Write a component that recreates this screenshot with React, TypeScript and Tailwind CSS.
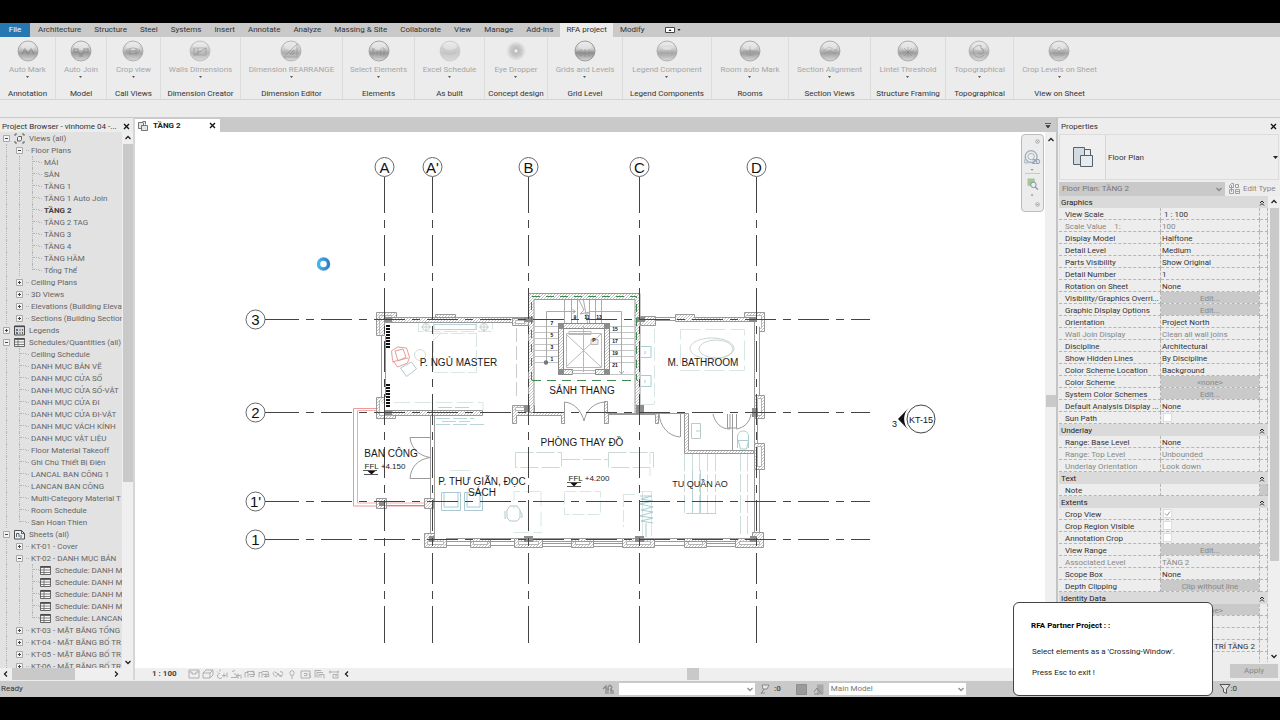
import React from "react";

type Group = { label: string; title: string; width: string; tone: string; glyph: React.ReactNode };

const menuTabs = [
  "Architecture", "Structure", "Steel", "Systems", "Insert", "Annotate", "Analyze", "Massing & Site",
  "Collaborate", "View", "Manage", "Add-Ins", "RFA project", "Modify",
];

const groups: Group[] = [
  { label: "Auto Mark", title: "Annotation", width: "w-14", tone: "#9c9c9c", glyph: <path d="M5 14l3-5 3 5 3-5 3 5M7 9l2 4m5-4l-2 4" strokeWidth="1.600" /> },
  { label: "Auto Join", title: "Model", width: "w-[51px]", tone: "#9a9a9a", glyph: <path d="M4 9h4v3H4zM14 9h4v3h-4zM8 12l3 3 3-3M9 16h4" strokeWidth="1.600" /> },
  { label: "Crop view", title: "Call Views", width: "w-[54px]", tone: "#a4a4a4", glyph: <path d="M4 11c4-4 10-4 14 0-4 4-10 4-14 0zM8 8v7m6-7v7M6 11h10" /> },
  { label: "Walls Dimensions", title: "Dimension Creator", width: "w-20", tone: "#b8b8b8", glyph: <path d="M5 8h12v7H5zM5 15l12-7M9 8v7" /> },
  { label: "Dimension REARRANGE", title: "Dimension Editor", width: "w-[102px]", tone: "#acacac", glyph: <path d="M4 17L17 4v13zM10 14h4v-4z" /> },
  { label: "Select Elements", title: "Elements", width: "w-[72px]", tone: "#969696", glyph: <path d="M5 15V9m4 6v-4m4 5c-2-6 0-9 3-8v9M4 9h3" /> },
  { label: "Excel Schedule", title: "As built", width: "w-[70px]", tone: "#c9c9c9", glyph: <path d="M5 12c4 3 8 3 12 0" opacity=".3" /> },
  { label: "Eye Dropper", title: "Concept design", width: "w-[63px]", tone: "flower", glyph: null },
  { label: "Grids and Levels", title: "Grid Level", width: "w-[75px]", tone: "#8c8c8c", glyph: <path d="M5 12h2m4-3v2m4 1h2M6 16l2-1m3-1v3m3-2l2 1M7 9l1 1m7-1l-1 1M10 13h2" /> },
  { label: "Legend Component", title: "Legend Components", width: "w-[89px]", tone: "#a6a6a6", glyph: <path d="M6 6h10v10H6z" opacity=".25" /> },
  { label: "Room auto Mark", title: "Rooms", width: "w-[77px]", tone: "#9b9b9b", glyph: <path d="M4 11h14M11 6v10M7 13l4-4 4 4M7 15h8" opacity=".6" /> },
  { label: "Section Alignment", title: "Section Views", width: "w-[82px]", tone: "#a0a0a0", glyph: <path d="M4 10h3m2 0h4m2 0h3M5 14c3-3 9-3 12 0M7 9l3-2 4 2" opacity=".7" /> },
  { label: "Lintel Threshold", title: "Structure Framing", width: "w-[75px]", tone: "#9e9e9e", glyph: <path d="M5 12h12M11 7v10M7 8l8 8M15 8l-8 8" /> },
  { label: "Topographical", title: "Topographical", width: "w-[68px]", tone: "#acacac", glyph: <path d="M14 6a6 6 0 1 0 2 9M13 8a3 3 0 1 1-3 4M12 6l3 5" /> },
  { label: "Crop Levels on Sheet", title: "View on Sheet", width: "w-[91px]", tone: "#a2a2a2", glyph: <path d="M4 9l3 2 4-4 4 4 3-2M5 13h12M6 15h10M9 10l2 2 2-2" opacity=".7" /> },
];

function Ball({ tone, glyph, id }: { tone: string; glyph: React.ReactNode; id: string }) {
  if (tone === "flower")
    return (
      <svg className="size-[22px]" viewBox="0 0 22 22" aria-hidden="true">
        <defs>
          <radialGradient id={id}>
            <stop offset="0" stopColor="#ababab" />
            <stop offset=".6" stopColor="#cecece" />
            <stop offset="1" stopColor="#ececec" />
          </radialGradient>
        </defs>
        <circle cx="11" cy="11" r="10" fill={`url(#${id})`} />
        <path d="M11 11L8 5M11 11l3-6M11 11l6-2M11 11l6 4M11 11l1 6M11 11l-4 5M11 11l-6 1M11 11L6 7" stroke="#c4c4c4" strokeWidth="1" />
        <circle cx="11" cy="11" r="1.4" fill="#f4f4f4" />
      </svg>
    );
  return (
    <svg className="size-[22px]" viewBox="0 0 22 22" aria-hidden="true">
      <defs>
        <linearGradient id={id} x1="0" y1="0" x2="0" y2="1">
          <stop offset="0" stopColor="#e3e3e3" />
          <stop offset=".4" stopColor="#cdcdcd" />
          <stop offset=".6" stopColor={tone} />
          <stop offset="1" stopColor="#d9d9d9" />
        </linearGradient>
      </defs>
      <circle cx="11" cy="11" r="10" fill={`url(#${id})`} stroke={tone} strokeWidth=".8" />
      <ellipse cx="11" cy="6" rx="7" ry="4" fill="#fff" opacity=".35" />
      <g fill="none" stroke="#858585" strokeWidth=".9" opacity=".55">{glyph}</g>
    </svg>
  );
}

type Row = { t: string; lv: 0 | 1 | 2; box?: "+" | "-"; icon?: string; bold?: boolean; last?: boolean };

const rows: Row[] = [
  { t: "Views (all)", lv: 0, box: "-", icon: "views" },
  { t: "Floor Plans", lv: 1, box: "-" },
  { t: "MÁI", lv: 2 },
  { t: "SÂN", lv: 2 },
  { t: "TẦNG 1", lv: 2 },
  { t: "TẦNG 1 Auto Join", lv: 2 },
  { t: "TẦNG 2", lv: 2, bold: true },
  { t: "TẦNG 2 TAG", lv: 2 },
  { t: "TẦNG 3", lv: 2 },
  { t: "TẦNG 4", lv: 2 },
  { t: "TẦNG HẦM", lv: 2 },
  { t: "Tổng Thể", lv: 2, last: true },
  { t: "Ceiling Plans", lv: 1, box: "+" },
  { t: "3D Views", lv: 1, box: "+" },
  { t: "Elevations (Building Eleva", lv: 1, box: "+" },
  { t: "Sections (Building Section", lv: 1, box: "+", last: true },
  { t: "Legends", lv: 0, box: "+", icon: "legend" },
  { t: "Schedules/Quantities (all)", lv: 0, box: "-", icon: "table" },
  { t: "Ceiling Schedule", lv: 1 },
  { t: "DANH MỤC BẢN VẼ", lv: 1 },
  { t: "DANH MỤC CỬA SỔ", lv: 1 },
  { t: "DANH MỤC CỬA SỔ-VẬT", lv: 1 },
  { t: "DANH MỤC CỬA ĐI", lv: 1 },
  { t: "DANH MỤC CỬA ĐI-VẬT", lv: 1 },
  { t: "DANH MỤC VÁCH KÍNH", lv: 1 },
  { t: "DANH MỤC VẬT LIỆU", lv: 1 },
  { t: "Floor Material Takeoff", lv: 1 },
  { t: "Ghi Chú Thiết Bị Điện", lv: 1 },
  { t: "LANCAL BAN CÔNG 1", lv: 1 },
  { t: "LANCAN BAN CÔNG", lv: 1 },
  { t: "Multi-Category Material T", lv: 1 },
  { t: "Room Schedule", lv: 1 },
  { t: "San Hoan Thien", lv: 1, last: true },
  { t: "Sheets (all)", lv: 0, box: "-", icon: "sheet" },
  { t: "KT-01 - Cover", lv: 1, box: "+" },
  { t: "KT-02 - DANH MỤC BẢN", lv: 1, box: "-" },
  { t: "Schedule: DANH M", lv: 2, icon: "table" },
  { t: "Schedule: DANH M", lv: 2, icon: "table" },
  { t: "Schedule: DANH M", lv: 2, icon: "table" },
  { t: "Schedule: DANH M", lv: 2, icon: "table" },
  { t: "Schedule: LANCAN", lv: 2, icon: "table", last: true },
  { t: "KT-03 - MẶT BẰNG TỔNG", lv: 1, box: "+" },
  { t: "KT-04 - MẶT BẰNG BỐ TR", lv: 1, box: "+" },
  { t: "KT-05 - MẶT BẰNG BỐ TR", lv: 1, box: "+" },
  { t: "KT-06 - MẶT BẰNG BỐ TR", lv: 1, box: "+" },
];

function TreeIcon({ name }: { name: string }) {
  if (name === "views")
    return (
      <svg className="size-[11px] shrink-0" viewBox="0 0 11 11" fill="none" stroke="#555" aria-hidden="true">
        <path d="M1 3V1h2M8 1h2v2M10 8v2H8M3 10H1V8" strokeWidth=".9" />
        <path d="M3.500 4.500l1-1h3v3l-1 1.500h-3z" strokeWidth=".9" fill="#eee" />
      </svg>
    );
  if (name === "legend")
    return (
      <svg className="size-[11px] shrink-0" viewBox="0 0 11 11" fill="none" stroke="#4a4a4a" aria-hidden="true">
        <path d="M.5 1h10v9H.5z" fill="#d4dae0" />
        <path d="M.5 1.500h10" strokeWidth="1.200" />
        <path d="M2 5h2M2 8h2M5.500 5h1M5.500 8h1M8 5h1M8 8h1" strokeWidth="1.3" />
      </svg>
    );
  if (name === "sheet")
    return (
      <svg className="size-[11px] shrink-0" viewBox="0 0 11 11" fill="none" stroke="#4a4f55" aria-hidden="true">
        <path d="M.5 1.500h7l3 3v5.500H.5z" fill="#eef1f4" />
        <path d="M7.500 1.500v3h3M2.500 8V4.500H5V8M7 6v3" strokeWidth=".9" />
      </svg>
    );
  return (
    <svg className="size-[11px] shrink-0" viewBox="0 0 11 11" fill="none" stroke="#666" aria-hidden="true">
      <path d="M.5 1.500h10v8H.5z" fill="#f6f6f6" />
      <path d="M.5 2h10" stroke="#444" strokeWidth="1.600" />
      <path d="M.5 5h10M.5 7.500h10M4 2v7.500" strokeWidth=".8" />
    </svg>
  );
}

/* Vertical guide line centred in one 13px indent column, with an optional branch to its right. */
function Guide({ half = false, branch = false }: { half?: boolean; branch?: boolean }) {
  return (
    <span className="flex h-full w-[13px] shrink-0">
      <span className={`w-[7px] border-r border-dotted border-[#b5b5b5] ${half ? "h-1/2" : "h-full"}`} />
      {branch && <span className="h-1/2 flex-1 border-b border-dotted border-[#b5b5b5]" />}
    </span>
  );
}

function Toggle({ kind }: { kind: "+" | "-" }) {
  return (
    <span className="flex w-[13px] shrink-0 justify-center">
      <svg className="size-[7px]" viewBox="0 0 7 7" fill="none" aria-hidden="true">
        <path d="M.5.5h6v6h-6z" fill="#f4f4f4" stroke="#a8a8a8" />
        <path d={kind === "+" ? "M2 3.500h3M3.500 2v3" : "M2 3.500h3"} stroke="#444" />
      </svg>
    </span>
  );
}

function TreeRow({ r }: { r: Row }) {
  const inner = r.lv === 2 && r.icon;
  return (
    <li className="flex h-3 items-center whitespace-nowrap">
      {r.lv === 0 ? <Toggle kind={r.box!} /> : <Guide />}
      {r.lv === 1 && (r.box ? <Toggle kind={r.box} /> : <Guide half={r.last} branch />)}
      {r.lv === 2 && <Guide />}
      {r.lv === 2 && <Guide half={r.last} branch />}
      {r.lv > 0 && <span className={`shrink-0 border-t border-dotted border-[#b5b5b5] ${inner ? "w-px" : "w-[3px]"}`} />}
      {r.lv === 0 && <span className="w-px shrink-0" />}
      {r.icon && <TreeIcon name={r.icon} />}
      <a href="#view" className={`shrink-0 pt-[2px] ${r.icon ? "pl-1" : "pl-[2px]"} ${r.bold ? "font-bold text-[#444]" : ""}`}>
        {r.t}
      </a>
    </li>
  );
}

function Chevron({ d, className = "" }: { d: "up" | "down" | "left" | "right"; className?: string }) {
  const p = { up: "M1.500 5l2.500-2.500L6.500 5", down: "M1.500 3l2.500 2.500L6.500 3", left: "M5 1.500L2.500 4 5 6.500", right: "M3 1.500L5.500 4 3 6.500" }[d];
  return (
    <svg className={`size-2 shrink-0 ${className}`} viewBox="0 0 8 8" fill="none" stroke="#222" strokeWidth="1.3" aria-hidden="true">
      <path d={p} />
    </svg>
  );
}

function Close() {
  return (
    <svg className="size-[7px]" viewBox="0 0 7 7" stroke="#111" strokeWidth="1.3" aria-hidden="true">
      <path d="M1 1l5 5M6 1L1 6" />
    </svg>
  );
}

function Browser() {
  return (
    <aside className="flex w-[133px] shrink-0 flex-col bg-[#e2e2e2] text-[#666]">
      <div className="flex h-[14px] shrink-0 items-center justify-between bg-[#ececec] pl-[2px] pr-[3px] pt-[2px] text-[#333]">
        <h2 className="pt-[2px]">Project Browser - vinhome 04 -...</h2>
        <button aria-label="Close project browser"><Close /></button>
      </div>
      <div className="flex min-h-0 flex-1">
        <ul className="min-w-0 flex-1 overflow-hidden">
          {rows.map((r, i) => <TreeRow key={i} r={r} />)}
        </ul>
        <div className="flex w-[11px] shrink-0 flex-col items-center bg-[#efefef]">
          <button aria-label="Scroll up" className="flex h-3 items-center"><Chevron d="up" /></button>
          <div className="h-[338px] w-[10px] bg-[#c9c9c9]" />
          <button aria-label="Scroll down" className="mt-auto flex h-3 items-center"><Chevron d="down" /></button>
        </div>
      </div>
      <div className="flex h-3 shrink-0 items-center bg-[#efefef]">
        <button aria-label="Scroll left" className="flex w-3 justify-center"><Chevron d="left" /></button>
        <div className="h-full w-[63px] bg-[#c9c9c9]" />
        <button aria-label="Scroll right" className="ml-auto mr-[11px] flex w-3 justify-center"><Chevron d="right" /></button>
      </div>
    </aside>
  );
}

const cols: [string, number][] = [["A", 384.5], ["A'", 432.5], ["B", 528.5], ["C", 639.5], ["D", 756.5]];
const lines: [string, number][] = [["3", 319.5], ["2", 412.5], ["1'", 501.5], ["1", 539.5]];

function Plan() {
  return (
    <svg className="size-full" viewBox="135 132 910 536" preserveAspectRatio="xMinYMin meet" fill="none" fontFamily="Liberation Sans, Arial, sans-serif" role="img" aria-label="Floor plan TẦNG 2">
      <defs>
        <pattern id="hatch" width="3" height="3" patternUnits="userSpaceOnUse">
          <rect width="3" height="3" fill="#fff" />
          <path d="M-1 4L4-1M-1 1L1-1M2 4L4 2" stroke="#a9a9a9" strokeWidth=".7" />
        </pattern>
        <linearGradient id="busy" x1="0" x2="1"><stop offset="0" stopColor="#46b4e8" /><stop offset="1" stopColor="#2f7fd0" /></linearGradient>
      </defs>

      {/* furniture */}
      <g stroke="#d8e6e6">
        <path d="M418.500 321.500h74v10h-74zM433.500 322v50.500h43V322M434 333.500h43M434 340l8-8" strokeDasharray="14 3" />
        <circle cx="426" cy="327" r="3.500" stroke="#c5d2d2" /><circle cx="484" cy="327" r="3.500" stroke="#c5d2d2" />
        <path d="M421 327h10M426 322v10M479 327h10M484 322v10" stroke="#c5d2d2" />
        <path d="M434 324.500h42v5h-42z" stroke="#b9d0d6" />
        <path d="M516.500 328v70" stroke="#ccc" strokeDasharray="14 4" />
        <path d="M394 402.500h89v8" strokeDasharray="16 5" />
        <path d="M438 407.500h34M436 418.500h38M442 421.500h28M436 424.500h48" stroke="#b9d3d9" strokeDasharray="14 3" />
        <circle cx="420" cy="355" r="5.500" stroke="#d3dada" />
        <path d="M400.500 368l11-6 5 7-10 7.500z" stroke="#b5c9cf" />
        <path d="M515.500 452.500h46v15h-46zM562 459.500h46M608.500 452.500h45v15h-45z" stroke="#cbd9d9" strokeDasharray="18 3" />
        <path d="M441.500 492.500h19v18h-19zM444 492.500v14.500h14v-14.500M464.500 492.500h18v18h-18zM467 492.500v14.500h13v-14.500" stroke="#a9c8d2" />
        <path d="M450 470.500h20" />
        <path d="M540 491.500h-26v17M541 491.500v42M514 532.500h27" strokeDasharray="15 5" />
        <path d="M507 510l3-4h7l3 4v8l-3 3h-7l-3-3zM505 511v8M520 511l2 3v4" stroke="#afcad0" />
        <path d="M564.500 491.500h36v23h-36zM623 494.500h15M623.500 495v32M650 452v24" strokeDasharray="12 3" />
        <path d="M640.500 491.500h12M642.500 492v44M651.500 492v44" />
        <path d="M640 496h12l-11 3 12 2-13 3 13 3-12 3 12 2-13 4 13 2-12 3 12 2M646 523v14" stroke="#a9ccd2" />
        <path d="M654.500 329v75M641 404.500h13" strokeDasharray="14 4" />
        <path d="M641 346.500h10v11h-10M641 375.500h10v11h-10M645 351v3M645 380v3" stroke="#a9ccd2" />
        <path d="M680.500 329.500h64v41h-64z" strokeDasharray="20 5" />
        <ellipse cx="712" cy="348.500" rx="22" ry="10.500" stroke="#cdd5d5" /><ellipse cx="716" cy="349" rx="17" ry="9" stroke="#cdd5d5" />
        <path d="M691.500 423.500h9v15h-9zM696 431h5" stroke="#bccaca" />
        <path d="M737.500 448v-12c1-4 3-5 5.500-5s5 1 5.500 5v12M737 440.500h12M738.500 441l2 8h6l2-8" stroke="#a9ccd2" />
        <path d="M684.500 453v60M692.500 453v60M699.500 453v60M707.500 453v60M715.500 453v60M740.500 453v84M747.500 453v84" stroke="#cbdcdc" strokeDasharray="18 3" />
        <path d="M686 513.500h30M692.500 470v43M700.500 470v43" stroke="#b9d3d6" />
      </g>
      <g stroke="#ea9a9a">
        <path d="M391.500 351l6-4 9 1 3 9-2 6-10 4-5-7zM395 351l8-2 3 8-8 4zM392 362l16-4" />
        <path d="M384 408.500h-30.500V506H425" /><path d="M384 410.500h-26.500V503H425" strokeWidth=".8" />
      </g>

      {/* walls */}
      <g fill="url(#hatch)" stroke="#8f8f8f" strokeWidth=".9">
        <path d="M384.500 317.500h148v5h-148zM435.500 314.500h20v3h-20z" />
        <path d="M376.500 312.500h20v5h-12v18h-8z" />
        <path d="M376.500 397.500h8v13h11v8h-19z" />
        <path d="M384.500 410.500h98v5h-98z" />
        <path d="M512.500 318.500h20v7h-20z" />
        <path d="M512.500 405.500h22v7h30v11h-3v-8h-45v8h-4z" />
        <path d="M376.500 498.500h10v10h-10zM424.500 498.500h9v10h-9z" />
        <path d="M424.500 533.500h10v6h12v8h-22zM470.500 538.500h20v9h-20zM514.500 538.500h28v9h-28zM571.500 538.500h22v9h-22zM622.500 538.500h32v9h-32zM684.500 538.500h22v9h-22zM735.500 538.500h17v-6h11v15h-28z" />
        <path d="M528.500 293.500h111.500v120h-5v-114h-101v113h-5.500z" />
        <path d="M607.500 401.500h-3v22h4v-9h47v9h3v-10h-51z" />
        <path d="M640.500 316.500h15v9h-15zM675.500 314.500h19v3h55v4h-74z" />
        <path d="M744.500 312.500h20v19h-5v-14h-15z" />
        <path d="M757.500 395.500h7v23h-10v-23zM754.500 443.500h10v26h-10z" />
        <path d="M684.500 413.500h4v37h65v3h-69z" />
      </g>
      {/* hollow cores of the corner columns */}
      <g fill="#fff" stroke="#a5a5a5" strokeWidth=".8">
        <path d="M379.500 315.500h13M379.500 315.500v18M379.500 400v15.500h13M515.500 320.500h9v3h-9zM515.500 407.500h9v3h-9zM427.500 541.500h16v3h-16zM473.500 541.500h14v3h-14zM518.500 541.500h20v3h-20zM575.500 541.500h14v3h-14zM626.500 541.500h24v3h-24zM688.500 541.500h14v3h-14zM739.500 541.500h20v3h-20zM747 315.500h14.500v13M757.500 398.500h4v17h-4zM757.500 446.500h4v20h-4z" />
      </g>
      <g stroke="#9a9a9a">
        <path d="M381.500 336v61M385.500 336v61M430.500 416v82M434.500 416v120M430.500 508v25M754.500 322v73M759.500 331v64M757.500 418v25M754.500 418v25M754.500 470v63M759.500 470v63" />
        <path d="M387 505.500h37M446 538.500h68M446 541.500h68M543 538.500h79M543 541.500h79M655 538.500h80M655 541.500h80M447 545.500h23M490 545.500h24M543 543.500h28M543 546.500h28M594 543.500h28M594 546.500h28M655 545.500h29M706 543.500h29M706 546.500h29M656 317.500h19M656 320.500h19" />
        <path d="M430 437.500h-20c1 10 8 18 20 20M430 478.500h-20c1-12 8-19 20-21" />
        <path d="M564.500 402v22M604.500 402v22M564.500 402c10 1 17 9 19.500 19 2-10 9-18 20.500-19" />
        <path d="M680.500 414v23M659 414c1 12 9 22 21 23M658 413.500h30" />
        <path d="M732.500 414v36M713 414c2 9 8 15 17 15v-15M736 429c8-1 14-7 15-15M727.500 414v14h9v-14" />
        <path d="M564.500 300v23M571.500 300v23M577.500 300v23M583.500 300l4 23M589.500 300v23M595.500 300v23M601.500 300v23" stroke="#ababab" />
        <path d="M534 326.500h24M534 332.500h24M534 338.500h24M534 344.500h24M534 350.500h24M534 356.500h24M534 362.500h24M610 326.500h24M610 332.500h24M610 338.500h24M610 344.500h24M610 350.500h24M610 356.500h24M610 362.500h24M610 374.500h24" stroke="#c4c4c4" />
        <path d="M546.500 362v-50.500h29l-3-2m3 2l-3 2M579 300l5 10-4 4 10-2-5 4M590 311.500h31.500V374l-2.500-3m2.500 3l2.500-3" stroke="#ababab" />
      </g>
      <circle cx="546" cy="362.500" r="2.200" fill="#777" />
      <path d="M558.500 323.500h51v51h-14v-5h9v-41h-41v41h9v5h-14z" fill="url(#hatch)" stroke="#888" />
      <g stroke="#b9b9b9">
        <path d="M566.500 333.500h35v34h-35zM566 334l35 33M601 334l-35 33M583.500 326v46M569 331.500h22v3h-22z" />
        <path d="M572 370.500h23M572 373.500h23" />
        <path d="M591 339.500h7v5h-7z" fill="#eee" />
      </g>
      <path d="M558 323h6v6h-6zM604 323h6v6h-6zM558 369h6v6h-6zM604 369h6v6h-6zM636 405h8v9h-8zM524 405h6v7h-6zM384 317h8v5h-8zM384 410h8v5h-8zM524 317h9v5h-9zM637 317h8v5h-8zM749 317h8v5h-8zM752 408h6v9h-6zM524 536h9v6h-9zM635 536h9v6h-9zM379 501h5v5h-5zM429 536h5v6h-5zM750 536h7v6h-7z" fill="#8c8c8c" />
      <path d="M531.500 380V296.500h105V380" stroke="#3d8a4a" strokeDasharray="8 6" />
      <path d="M532 380.500h106" stroke="#3d8a4a" strokeDasharray="9 6" />
      <path d="M388 325v24M388 384v24" stroke="#111" strokeWidth="4" strokeDasharray="2 1" />

      {/* grid lines */}
      <g stroke="#444" strokeDasharray="30.500 7.500 7.500 7.500" shapeRendering="crispEdges">
        {cols.map(([n, x]) => <path key={n} d={`M${x} 182V607`} />)}
        {lines.map(([n, y]) => <path key={n} d={`M268 ${y}H870`} />)}
      </g>
      {cols.map(([n, x]) => (
        <g key={n}>
          <path d={`M${x} 177v6M${x} 607v36`} stroke="#444" shapeRendering="crispEdges" />
          <circle cx={x} cy="167" r="9.500" stroke="#444" strokeWidth=".8" fill="#fff" />
          <text x={x} y="172.500" fontSize="15" fill="#111" textAnchor="middle">{n}</text>
        </g>
      ))}
      {lines.map(([n, y]) => (
        <g key={n}>
          <path d={`M265 ${y}h4`} stroke="#444" shapeRendering="crispEdges" />
          <circle cx="255.500" cy={y} r="9.500" stroke="#444" strokeWidth=".8" fill="#fff" />
          <text x="255.500" y={y + 5} fontSize="15" fill="#111" textAnchor="middle">{n}</text>
        </g>
      ))}

      {/* room names */}
      <g fill="#1a1a1a" fontSize="10" textAnchor="middle">
        <text x="458.500" y="366">P. NGỦ MASTER</text>
        <text x="582" y="394">SẢNH THANG</text>
        <text x="703" y="366">M. BATHROOM</text>
        <text x="582" y="446">PHÒNG THAY ĐỒ</text>
        <text x="391" y="457">BAN CÔNG</text>
        <text x="482" y="485">P. THƯ GIÃN, ĐỌC</text>
        <text x="482" y="496">SÁCH</text>
        <text x="700" y="487" fontSize="9">TU QUẦN AO</text>
        <text x="385" y="469" fontSize="8">FFL +4.150</text>
        <text x="589" y="481" fontSize="8">FFL +4.200</text>
      </g>
      <g fill="#111" fontSize="5" fontWeight="700" textAnchor="middle">
        {["7", "5", "3", "1"].map((n, i) => <text key={n} x="552" y={325 + i * 12}>{n}</text>)}
        {["15", "17", "19", "21"].map((n, i) => <text key={n} x="615" y={331 + i * 12}>{n}</text>)}
        <text x="575" y="319">9</text><text x="587" y="319">11</text><text x="599" y="319">13</text>
        <text x="594" y="342">P</text>
      </g>
      <path d="M367 470.500h9l-4.500 4zM570 482.500h8l-4 4z" fill="#111" />
      <path d="M363 470.500h14M364 474.500h14M567 482.500h14M567 486.500h14" stroke="#555" />

      <circle cx="921" cy="419" r="14" stroke="#444" fill="#fff" />
      <path d="M898 419l11-11.500a16 16 0 0 0 0 23z" fill="#111" />
      <text x="921" y="422.500" fontSize="9" fill="#111" textAnchor="middle">KT-15</text>
      <text x="894.500" y="427" fontSize="9" fill="#111" textAnchor="middle">3</text>

      <circle cx="323.500" cy="264" r="5" stroke="url(#busy)" strokeWidth="3.500" />
    </svg>
  );
}

function NavBar() {
  return (
    <div className="absolute top-[2px] right-px flex h-[78px] w-[23px] flex-col items-center rounded-[4px] border border-[#bcbcbc] bg-[#ececec] py-px">
      <svg className="h-full w-full" viewBox="0 0 23 76" fill="none" aria-hidden="true">
        <circle cx="17" cy="3.500" r="2" stroke="#aaa" /><path d="M16 2.500l2 2m0-2l-2 2" stroke="#999" strokeWidth=".6" />
        <circle cx="10" cy="20" r="6.500" stroke="#9fb0bd" strokeWidth="1.500" /><circle cx="10" cy="20" r="3.500" stroke="#9fb0bd" />
        <path d="M3 23v4h4" stroke="#9fb0bd" />
        <text x="11" y="28" fontSize="7" fontWeight="700" fill="#7b9cbf" fontFamily="Liberation Sans, sans-serif">2D</text>
        <path d="M9.500 33.500h3l-1.500 2zM9.500 61.500h3l-1.500 2z" fill="#888" />
        <path d="M3 38.500h17" stroke="#c4c4c4" />
        <path d="M6 44h8v8H6z" fill="#a5c794" /><circle cx="12.500" cy="51" r="3" fill="#e6eef2" stroke="#7d8d96" /><path d="M14.500 53.500l3 2.500" stroke="#7d8d96" strokeWidth="1.300" />
        <circle cx="17" cy="72.500" r="2" stroke="#aaa" /><path d="M16 72.500h2" stroke="#999" />
      </svg>
    </div>
  );
}

const viewIcons = [
  "M1 1.500h10v8H1zM1 3.500h3v2h4v-2h3",
  "M1 4.500h7v5H1zM1 4.500l3-3h7v5l-3 3M8 4.500l3-3",
  "M4 5a2.500 2.500 0 1 0 2 4M4 1v2M1 3l1 1M8 5v4M6 7h4M11 4v5M1 7h1",
  "M1 9h6l-1-3-2-1M8 5v5M6 7h4M2 3l3-1M11 6v4",
  "M1 9V4h3v5M3 3h7v5H6M8 2l2 3M5 6h6",
  "M1 9V4h3v5M4 3h6l1 5H6M8 5v4M5 6h5",
  "M1 4c1 5 4 5 5 1 1 4 4 4 5 0M2 3l8 5M8 3l3 1",
  "M6 2a2.500 2.500 0 0 1 1 4.500v1H5v-1A2.500 2.500 0 0 1 6 2zM5 9.500h2",
  "M1 2.500h9v7H1zM4 5h3v2H4M9 5l2 4",
  "M1 9V2h6M3 9V4h6M5 9V6h5v4M7 7v2",
  "M1 3.500h10M2 2v3M10 2v3M5 9.500V6h5v3.500zM7 7.500h2",
];

function Canvas() {
  return (
    <main className="flex min-w-0 flex-1 flex-col border-l-2 border-[#d6d6d6] bg-white">
      <div className="flex h-[14px] shrink-0 items-center bg-[#c9c9c9] pt-px">
        <div className="flex h-full w-[85px] items-center gap-[5px] bg-white pl-[3px] pr-1">
          <svg className="size-[10px]" viewBox="0 0 10 10" fill="#dfe6ea" stroke="#555" strokeWidth=".8" aria-hidden="true">
            <path d="M.5 1.500h5v6h-5z" /><path d="M4.500 .5h3v3M3.500 4.500h6v5h-6z" />
          </svg>
          <span className="pt-px font-bold text-[#222]">TẦNG 2</span>
          <button aria-label="Close view" className="ml-auto"><Close /></button>
        </div>
        <svg className="ml-auto mr-1 size-2" viewBox="0 0 8 8" aria-hidden="true"><path d="M1 1.500h6M2 3.500h4L4 6z" fill="#333" stroke="#444" strokeWidth=".8" /></svg>
      </div>
      <div className="flex min-h-0 flex-1">
        <div className="relative min-w-0 flex-1">
          <Plan />
          <NavBar />
        </div>
        <div className="flex w-[11px] shrink-0 flex-col items-center bg-[#efefef]">
          <button aria-label="Scroll view up" className="flex h-4 items-center"><Chevron d="up" /></button>
          <div className="mt-[247px] h-3 w-[10px] bg-[#c9c9c9]" />
        </div>
      </div>
      <div className="flex h-3 shrink-0 items-center bg-[#efefef] pl-[17px]">
        <span className="w-9 font-bold text-[#444]">1 : 100</span>
        {viewIcons.map((d, i) => (
          <button key={i} aria-label={`View control ${i + 1}`} className="w-[14px]">
            <svg className="size-3" viewBox="0 0 12 11" fill="none" stroke="#a8a8a8" strokeWidth=".9" aria-hidden="true"><path d={d} /></svg>
          </button>
        ))}
        <Chevron d="left" className="ml-px" />
        <div className="ml-[336px] h-full w-3 bg-[#c9c9c9]" />
      </div>
    </main>
  );
}

type Prop = { h?: string; k?: string; v?: string; kind?: "btn" | "check" | "on" | "input"; dim?: boolean; right?: boolean };
const props: Prop[] = [
  { h: "Graphics" },
  { k: "View Scale", v: " 1 : 100" },
  { k: "Scale Value    1:", v: "100", dim: true },
  { k: "Display Model", v: "Halftone" },
  { k: "Detail Level", v: "Medium" },
  { k: "Parts Visibility", v: "Show Original" },
  { k: "Detail Number", v: "1" },
  { k: "Rotation on Sheet", v: "None" },
  { k: "Visibility/Graphics Overri...", v: "Edit...", kind: "btn" },
  { k: "Graphic Display Options", v: "Edit...", kind: "btn" },
  { k: "Orientation", v: "Project North" },
  { k: "Wall Join Display", v: "Clean all wall joins", dim: true },
  { k: "Discipline", v: "Architectural" },
  { k: "Show Hidden Lines", v: "By Discipline" },
  { k: "Color Scheme Location", v: "Background" },
  { k: "Color Scheme", v: "<none>", kind: "btn" },
  { k: "System Color Schemes", v: "Edit...", kind: "btn" },
  { k: "Default Analysis Display ...", v: "None" },
  { k: "Sun Path", kind: "check" },
  { h: "Underlay" },
  { k: "Range: Base Level", v: "None" },
  { k: "Range: Top Level", v: "Unbounded", dim: true },
  { k: "Underlay Orientation", v: "Look down", dim: true },
  { h: "Text" },
  { k: "Note", kind: "input" },
  { h: "Extents" },
  { k: "Crop View", kind: "on" },
  { k: "Crop Region Visible", kind: "check" },
  { k: "Annotation Crop", kind: "check" },
  { k: "View Range", v: "Edit...", kind: "btn" },
  { k: "Associated Level", v: "TẦNG 2", dim: true },
  { k: "Scope Box", v: "None" },
  { k: "Depth Clipping", v: "Clip without line", kind: "btn" },
  { h: "Identity Data" },
  { k: "", v: "<none>", kind: "btn" },
  { k: "", v: "" },
  { k: "", v: "" },
  { k: "", v: "BỐ TRÍ TẦNG 2", right: true },
  { k: "", v: "" },
];

function PropValue({ p }: { p: Prop }) {
  if (p.kind === "btn")
    return <button aria-label={p.k ? `${p.k}: ${p.v}` : p.v} className="block h-[11px] w-full bg-[#c9c9c9] pt-[2px] text-center leading-[9px] text-[#888]">{p.v}</button>;
  if (p.kind === "check" || p.kind === "on")
    return (
      <span className="ml-[2px] grid size-[9px] place-items-center">
        <input type="checkbox" aria-label={p.k} defaultChecked={p.kind === "on"} className="col-start-1 row-start-1 size-[9px] appearance-none border border-[#ddd] bg-white" />
        {p.kind === "on" && (
          <svg className="pointer-events-none col-start-1 row-start-1 size-[7px]" viewBox="0 0 7 7" fill="none" stroke="#999" aria-hidden="true"><path d="M1 3.500l2 2 3-4" /></svg>
        )}
      </span>
    );
  if (p.kind === "input") return <input aria-label={p.k} className="block h-[11px] w-full bg-transparent" />;
  return <span className={`block whitespace-pre px-px pt-[2px] ${p.right ? "pr-1 text-right" : ""}`}>{p.v}</span>;
}

const cell = "h-3 overflow-hidden border-b border-r border-dashed border-[#b5b5b5] p-0 leading-[9px]";

function Properties() {
  return (
    <aside className="flex w-[224px] shrink-0 flex-col border-l-2 border-[#c4c4c4] bg-[#ededed] text-[#333]">
      <div className="flex h-[14px] shrink-0 items-center justify-between pl-[3px] pr-[3px] pt-[2px]">
        <h2 className="pt-[2px]">Properties</h2>
        <button aria-label="Close properties"><Close /></button>
      </div>
      <div className="mx-px mt-[2px] flex h-[46px] shrink-0 items-center border border-[#dcdcdc]">
        <div className="flex h-full w-[46px] items-center justify-center border-r border-[#d6d6d6] bg-[#efefef]">
          <svg className="size-[22px]" viewBox="0 0 22 22" fill="none" stroke="#56616b" aria-hidden="true">
            <path d="M1.500 1.500h11v17h-11z" fill="#d3dbe1" />
            <path d="M12.500 3.500h6v6M8.500 9.500h12v11h-12z" fill="#e6ebef" />
            <path d="M12.500 3.500v6h6" strokeDasharray="1.500 1" />
          </svg>
        </div>
        <span className="pl-[2px] pt-px">Floor Plan</span>
        <button aria-label="Change type" className="ml-auto">
          <svg className="h-[3px] w-[5px]" viewBox="0 0 5 3" aria-hidden="true"><path d="M0 0h5L2.500 3z" fill="#222" /></svg>
        </button>
      </div>
      <div className="flex h-4 shrink-0 items-center pt-px pl-px">
        <div className="flex h-[14px] w-[166px] shrink-0 items-center bg-[#c9c9c9]">
          <select aria-label="View type" className="h-full min-w-0 flex-1 appearance-none px-[3px] text-[#777]"><option>Floor Plan: TẦNG 2</option></select>
          <Chevron d="down" className="mr-[2px] opacity-40" />
        </div>
        <button className="flex items-center gap-[3px] whitespace-nowrap pl-1 text-[#888]">
          <svg className="size-[11px]" viewBox="0 0 11 11" fill="none" stroke="#999" strokeWidth=".9" aria-hidden="true"><path d="M.5 2.500l2-2h2v4h-4zM6.500 1.500h3v3h-3zM.5 6.500h4v4h-4zM6.500 6.500h4v4h-4zM2.500 2v7M7 8.500h3" /></svg>
          Edit Type
        </button>
      </div>
      <div className="flex min-h-0 flex-1">
        <div className="min-w-0 flex-1 overflow-hidden pl-px">
          <table className="w-full table-fixed border-separate border-spacing-0 text-left">
            <colgroup><col className="w-[102px]" /><col /><col className="w-2" /></colgroup>
            <tbody>
              {props.map((p, i) =>
                p.h ? (
                  <tr key={i}>
                    <th colSpan={3} className="h-3 bg-[#dadada] p-0 px-[2px] font-normal leading-[10px] text-[#222]">
                      <span className="flex items-center justify-between pt-[2px]">
                        {p.h}
                        <svg className="mr-px size-[6px]" viewBox="0 0 6 6" fill="none" stroke="#222" aria-hidden="true"><path d="M1 3l2-2 2 2M1 5.500l2-2 2 2" /></svg>
                      </span>
                    </th>
                  </tr>
                ) : (
                  <tr key={i} className={p.dim ? "text-[#888]" : ""}>
                    <td className={cell}><span className="block whitespace-pre pl-[6px] pt-[2px]">{p.k}</span></td>
                    <td className={cell}><PropValue p={p} /></td>
                    <td className={`${cell} ${p.kind === "input" ? "bg-[#c9c9c9]" : ""}`} />
                  </tr>
                )
              )}
            </tbody>
          </table>
        </div>
        <div className="flex w-3 shrink-0 flex-col items-center bg-[#efefef]">
          <button aria-label="Scroll properties up" className="flex h-3 items-center"><Chevron d="up" /></button>
          <div className="h-[353px] w-[9px] bg-[#c9c9c9]" />
          <button aria-label="Scroll properties down" className="mt-auto flex h-3 items-center"><Chevron d="down" /></button>
        </div>
      </div>
      <div className="flex h-[18px] shrink-0 items-center justify-end pr-[2px]">
        <button className="h-[14px] w-12 bg-[#c9c9c9] text-[#888]">Apply</button>
      </div>
    </aside>
  );
}

function StatusBar() {
  return (
    <footer className="flex h-[17px] shrink-0 items-center border-t border-[#eee] bg-[#c9c9c9] text-[#333]">
      <span className="w-[602px] pl-px">Ready</span>
      <svg className="size-3" viewBox="0 0 12 12" fill="none" stroke="#888" aria-hidden="true"><path d="M1 6l3-3v8M4 6h3M6 11V4l2-2 2 2-1 2v5M8 6l3 2v3" strokeWidth="1.200" /></svg>
      <div className="ml-[5px] flex h-3 w-[136px] items-center bg-white">
        <select aria-label="Workset" className="h-full min-w-0 flex-1 appearance-none"><option></option></select>
        <Chevron d="down" className="mr-px opacity-50" />
      </div>
      <svg className="ml-1 size-3" viewBox="0 0 12 12" fill="#e8e8e8" stroke="#888" aria-hidden="true"><path d="M3 2h7l-2 4H4zM5 6l-3 5M2 10h4" /></svg>
      <span className="pl-[3px] font-bold text-[#555]">:0</span>
      <svg className="ml-[15px] size-[11px]" viewBox="0 0 11 11" aria-hidden="true"><path d="M.5.5h10v10H.5z" fill="#9a9a9a" stroke="#8f8f8f" /></svg>
      <svg className="ml-[6px] size-[11px]" viewBox="0 0 11 11" aria-hidden="true"><path d="M4 .5h6.500v10H4z" fill="#a8a8a8" /><path d="M1 8l3-4 2 3 3 3M1 10h5" fill="none" stroke="#888" /></svg>
      <div className="ml-[5px] flex h-3 w-[137px] items-center bg-white">
        <select aria-label="Design option" className="h-full min-w-0 flex-1 appearance-none pl-[2px] text-[#777]"><option>Main Model</option></select>
        <Chevron d="down" className="mr-px opacity-50" />
      </div>
      <div className="ml-auto flex items-center pr-[43px]">
        <svg className="size-3" viewBox="0 0 12 12" fill="#dfe4e8" stroke="#555" aria-hidden="true"><path d="M1 1.500h10L7.500 6v4.500l-3-1.500V6z" /></svg>
        <span>:0</span>
      </div>
    </footer>
  );
}

export default function App() {
  return (
    <div className="relative flex h-screen flex-col overflow-hidden bg-black py-[23px] font-['Roboto','Noto_Sans',sans-serif] text-[8px] leading-3">
      <nav className="flex h-[14px] shrink-0 items-stretch gap-px bg-[#c9c9c9] text-[#333]">
        <button className="mr-px w-[30px] bg-[#2678b2] text-white">File</button>
        {menuTabs.map((t) => <button key={t} className={`whitespace-nowrap px-[6px] ${t === "RFA project" ? "bg-[#ececec]" : ""}`}>{t}</button>)}
        <button aria-label="Ribbon display" className="ml-[13px] flex items-center">
          <svg className="h-[6px] w-4" viewBox="0 0 16 6" aria-hidden="true"><path d="M.5.5h9v5h-9z" fill="#fff" stroke="#444" /><path d="M3.500 4h3L5 2zM12.500 2h3L14 4z" fill="#222" /></svg>
        </button>
      </nav>
      <div className="flex h-[63px] shrink-0 border-b border-[#d4d4d4] bg-[#ececec]">
        {groups.map((g, i) => (
          <section key={g.title} className={`flex shrink-0 flex-col items-center whitespace-nowrap pt-[3px] ${g.width} ${i < 14 ? "border-r border-[#dcdcdc]" : ""}`}>
            <button className="flex flex-col items-center text-[#a6a6a6]">
              <Ball tone={g.tone} glyph={g.glyph} id={`ball${i}`} />
              <span className="mt-[2px]">{g.label}</span>
              <svg className="h-[2px] w-[3px]" viewBox="0 0 3 2" aria-hidden="true"><path d="M0 0h3L1.500 2z" fill="#555" /></svg>
            </button>
            <h3 className="mt-[10px] text-[#333]">{g.title}</h3>
          </section>
        ))}
      </div>
      <div className="h-[18px] shrink-0 border-b border-[#c9c9c9] bg-[#ececec]" />
      <div className="flex min-h-0 flex-1">
        <Browser />
        <Canvas />
        <Properties />
      </div>
      <StatusBar />
      <div role="status" className="absolute right-[67px] bottom-6 h-[94px] w-[200px] rounded-[6px] border border-[#444] bg-white text-[#222]">
        <p className="pt-[17px] pl-[17px] font-bold text-black">RFA Partner Project : :</p>
        <p className="pt-[14px] pl-[18px]">Select elements as a 'Crossing-Window'.</p>
        <p className="pt-[9px] pl-[18px]">Press Esc to exit !</p>
      </div>
    </div>
  );
}
